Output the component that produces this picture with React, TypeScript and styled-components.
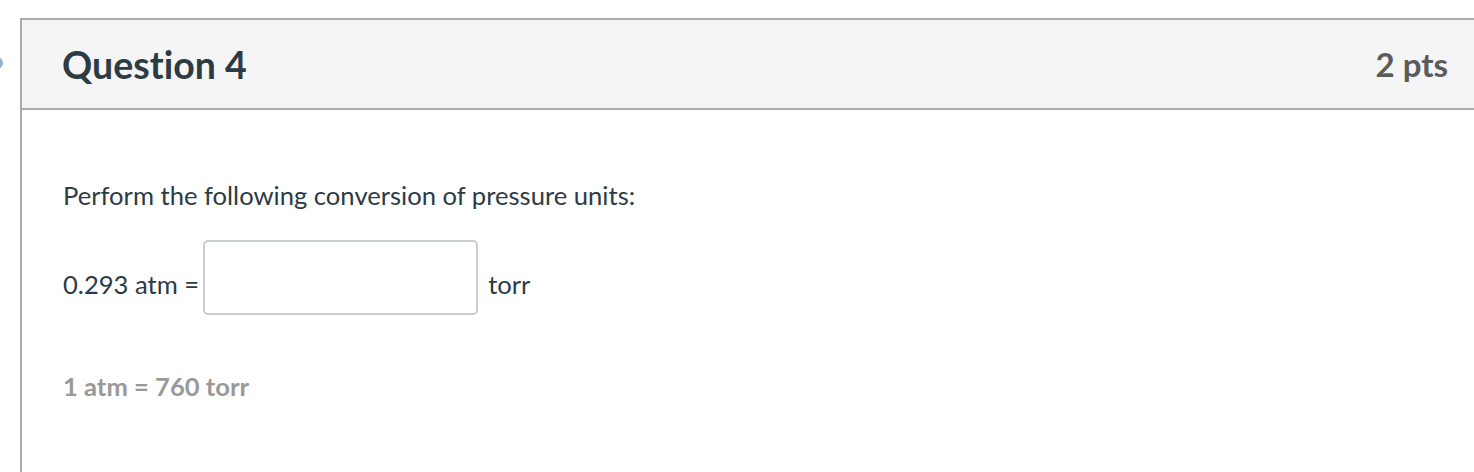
import styled, { createGlobalStyle } from "styled-components";

const GlobalStyle = createGlobalStyle`
  html, body {
    margin: 0;
    padding: 0;
    background: #ffffff;
  }
  body {
    font-family: Lato, "Open Sans", "Liberation Sans", sans-serif;
    font-variant-ligatures: none;
    color: #2d3b45;
    overflow: hidden;
  }
`;

const Page = styled.div`
  position: relative;
  width: 1474px;
  height: 472px;
  overflow: hidden;
  padding-top: 18px;
  box-sizing: border-box;
`;

// bookmark marker, mostly hidden past the left edge
const Marker = styled.div`
  position: absolute;
  left: -9px;
  top: 57px;
  width: 12px;
  height: 12px;
  border-radius: 50%;
  background: #7f9cbb;
  opacity: 0.8;
`;

const Card = styled.div`
  margin-left: 20px;
  width: 1460px;
  border: 2px solid #aaaaaa;
  background: #ffffff;
  min-height: 600px;
`;

const Header = styled.div`
  height: 88px;
  background: #f5f5f5;
  border-bottom: 2px solid #aaaaaa;
  display: flex;
  align-items: center;
  justify-content: space-between;
  padding: 0 26px 0 40px;
  box-sizing: content-box;
  width: 1386px;
`;

const Title = styled.h2`
  margin: 0;
  font-size: 37.5px;
  font-weight: 700;
  color: #2d3b45;
`;

const Points = styled.div`
  font-size: 33px;
  font-weight: 700;
  color: #5b5b5b;
`;

const Body = styled.div`
  padding: 67px 40px 0 41px;
  font-size: 25.6px;
  line-height: 36px;
`;

const Prompt = styled.p`
  margin: 0 0 27px;
`;

const AnswerRow = styled.div`
  display: flex;
  align-items: flex-end;
`;

const Label = styled.span<{ $gap: number }>`
  padding-bottom: 13px;
  margin: 0 ${(p) => p.$gap}px;
  &:first-child {
    margin-left: 0;
  }
`;

const AnswerInput = styled.input`
  width: 275px;
  height: 75px;
  box-sizing: border-box;
  border: 2px solid #c7cdd1;
  border-radius: 5px;
  background: #ffffff;
  font-family: inherit;
  font-size: 24px;
  padding: 0 12px;
  outline: none;
`;

const Hint = styled.p`
  margin: 53px 0 0;
  font-weight: 700;
  color: #999999;
`;

export default function App() {
  return (
    <>
      <GlobalStyle />
      <Page>
        <Marker />
        <Card>
          <Header>
            <Title>Question 4</Title>
            <Points>2 pts</Points>
          </Header>
          <Body>
            <Prompt>Perform the following conversion of pressure units:</Prompt>
            <AnswerRow>
              <Label $gap={4}>0.293 atm =</Label>
              <AnswerInput type="text" aria-label="answer" />
              <Label $gap={10}>torr</Label>
            </AnswerRow>
            <Hint>1 atm = 760 torr</Hint>
          </Body>
        </Card>
      </Page>
    </>
  );
}
